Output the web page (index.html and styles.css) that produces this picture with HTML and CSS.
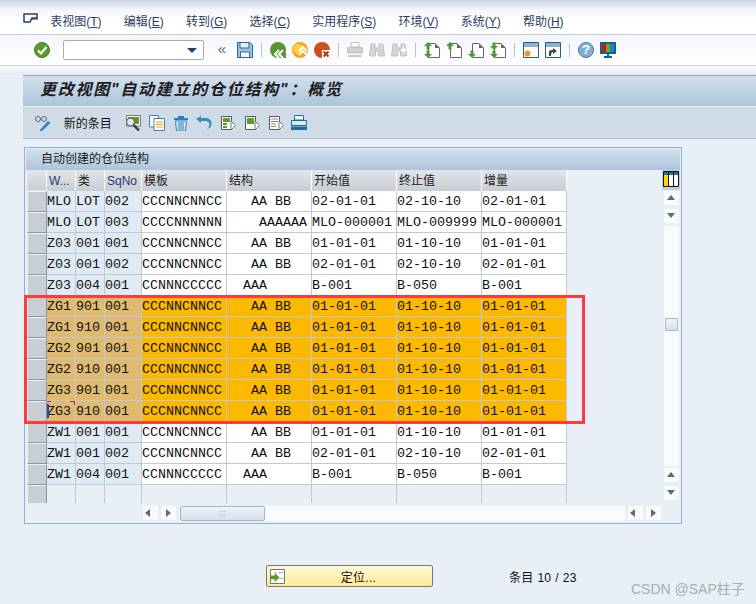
FILE: index.html
```html
<!DOCTYPE html>
<html lang="zh">
<head>
    <meta charset="UTF-8">
    <title>更改视图"自动建立的仓位结构"：概览</title>
    <link rel="stylesheet" href="styles.css">
</head>
<body>
    <svg class="defs" width="0" height="0">
        <defs>
            <symbol id="page" viewBox="0 0 16 16">
                <path d="M4.500 1.500H11L15.500 6V15.500H4.500Z" fill="#fff" stroke="#666"/>
                <path d="M11 1.500V6H15.500Z" fill="#666"/>
            </symbol>
            <symbol id="arrow-up" viewBox="0 0 8 8">
                <path d="M4 0L8 4H5.500V7.500H2.500V4H0Z" fill="#4b9a33"/>
            </symbol>
            <symbol id="arrow-down" viewBox="0 0 8 8">
                <path d="M4 8L8 4H5.500V.5H2.500V4H0Z" fill="#4b9a33"/>
            </symbol>
            <symbol id="doc-play" viewBox="0 0 16 16">
                <path d="M1.500 1.500H11.500V14.500H1.500Z" fill="#fff" stroke="#555"/>
                <path d="M11 6L15.500 10.500L11 15Z" fill="#fff" stroke="#777"/>
            </symbol>
        </defs>
    </svg>

    <div class="menubar">
        <svg class="menu-icon" viewBox="0 0 16 12"><path d="M1 1H14V5H9L7 9H1Z" fill="none" stroke="#27406b" stroke-width="1.500"/><path d="M8 6H15" stroke="#27406b" stroke-width="1.200"/></svg>
        <span class="menu-item">表视图(<u>T</u>)</span>
        <span class="menu-item">编辑(<u>E</u>)</span>
        <span class="menu-item">转到(<u>G</u>)</span>
        <span class="menu-item">选择(<u>C</u>)</span>
        <span class="menu-item">实用程序(<u>S</u>)</span>
        <span class="menu-item">环境(<u>V</u>)</span>
        <span class="menu-item">系统(<u>Y</u>)</span>
        <span class="menu-item">帮助(<u>H</u>)</span>
    </div>

    <div class="toolbar">
        <svg class="icon" viewBox="0 0 16 16"><circle cx="8" cy="8" r="7.500" fill="#5c9a2e" stroke="#467a22"/><path d="M4 8.500L7 11.500L12.500 5" fill="none" stroke="#fff" stroke-width="2.200"/></svg>
        <div class="command">
            <span class="command-arrow"></span>
        </div>
        <span class="chevrons">«</span>
        <svg class="icon" viewBox="0 0 16 16"><path d="M.5.500H13L15.500 3V15.500H.5Z" fill="#9fc3de" stroke="#1f6b9c"/><path d="M3 .5H12V6H3Z" fill="#e8f0f6" stroke="#1f6b9c"/><path d="M3.500 10H12.500V15.500H3.500Z" fill="#fff" stroke="#1f6b9c"/></svg>
        <span class="sep"></span>
        <svg class="icon" viewBox="0 0 16 16"><circle cx="8" cy="8" r="8" fill="#5a9331"/><path d="M3 11H16V16H7Z" fill="#5a9331"/><path d="M9 8L5 12L9 16M13 8L9 12L13 16" fill="none" stroke="#fff" stroke-width="2"/></svg>
        <svg class="icon" viewBox="0 0 16 16"><circle cx="8" cy="8" r="8" fill="#f4a21f"/><circle cx="6" cy="7" r="5" fill="#ffcf3c"/><path d="M7 9L11 5L15 9M7 13L11 9L15 13" fill="none" stroke="#fff" stroke-width="2"/></svg>
        <svg class="icon" viewBox="0 0 16 16"><circle cx="8" cy="8" r="8" fill="#cd4f1b"/><rect x="8" y="8" width="8" height="8" fill="#fff"/><path d="M9.500 9.500L14.500 14.500M14.500 9.500L9.500 14.500" stroke="#b5341a" stroke-width="2"/></svg>
        <span class="sep"></span>
        <svg class="icon dim" viewBox="0 0 16 16"><path d="M4 .5H12V5H4Z" fill="#fff" stroke="#bbb"/><path d="M.5 5.500H15.500V11H.5Z" fill="#ccc" stroke="#bbb"/><path d="M1 13H15V15H1Z" fill="#c4c4c4"/></svg>
        <svg class="icon dim" viewBox="0 0 16 16"><path d="M2 2H6V6H10V2H14L15.500 14H9.500V9H6.500V14H.5Z" fill="#d2d2d2" stroke="#bdbdbd"/></svg>
        <svg class="icon dim" viewBox="0 0 16 16"><path d="M2 2H6V6H10V2H14L15.500 14H9.500V9H6.500V14H.5Z" fill="#d2d2d2" stroke="#bdbdbd"/><path d="M10 8H15M12.500 5.500V10.500" stroke="#fff" stroke-width="2"/></svg>
        <span class="sep"></span>
        <span class="icon pageicon"><svg viewBox="0 0 16 16"><use href="#page"/></svg><svg class="arr a1" viewBox="0 0 8 8"><use href="#arrow-up"/></svg><svg class="arr a2" viewBox="0 0 8 8"><use href="#arrow-down"/></svg></span>
        <span class="icon pageicon"><svg viewBox="0 0 16 16"><use href="#page"/></svg><svg class="arr a1" viewBox="0 0 8 8"><use href="#arrow-up"/></svg></span>
        <span class="icon pageicon"><svg viewBox="0 0 16 16"><use href="#page"/></svg><svg class="arr a2" viewBox="0 0 8 8"><use href="#arrow-down"/></svg></span>
        <span class="icon pageicon"><svg viewBox="0 0 16 16"><use href="#page"/></svg><svg class="arr a1" viewBox="0 0 8 8"><use href="#arrow-down"/></svg><svg class="arr a2" viewBox="0 0 8 8"><use href="#arrow-down"/></svg></span>
        <span class="sep"></span>
        <svg class="icon" viewBox="0 0 16 16"><path d="M.5.500H15.500V15.500H.5Z" fill="#fff" stroke="#1f5f8b"/><path d="M1 1H15V5H1Z" fill="#8fb2d0"/><circle cx="4.500" cy="11.500" r="3" fill="#f59a12"/></svg>
        <svg class="icon" viewBox="0 0 16 16"><path d="M.5.500H15.500V15.500H.5Z" fill="#fff" stroke="#1f5f8b"/><path d="M1 1H15V5H1Z" fill="#8fb2d0"/><path d="M4 14V10Q4 8 7 8H8V6L12 9L8 12V10Q6 10 6 14Z" fill="#444"/></svg>
        <span class="sep"></span>
        <span class="icon help">?</span>
        <svg class="icon" viewBox="0 0 16 16"><path d="M0 0H16V12H0Z" fill="#14608f"/><path d="M2 2H6V10H2Z" fill="#cc1a1a"/><path d="M6 2H10V10H6Z" fill="#6aa82c"/><path d="M10 2H14V10H10Z" fill="#1d86c8"/><path d="M7 12H9V14H12V16H4V14H7Z" fill="#14608f"/></svg>
    </div>
    <div class="toolbar-foot"></div>

    <div class="title-bar">更改视图"自动建立的仓位结构"：概览</div>
    <div class="app-toolbar">
        <svg class="icon" viewBox="0 0 16 16"><circle cx="3" cy="4" r="2.500" fill="none" stroke="#666"/><circle cx="9" cy="4" r="2.500" fill="none" stroke="#666"/><path d="M5 15L13 6L15.500 8L7 16H5Z" fill="#2b84bd"/></svg>
        <span class="new-entry">新的条目</span>
        <svg class="icon" viewBox="0 0 16 16"><path d="M1.500.5H15.500V11H1.500Z" fill="#fff" stroke="#777"/><path d="M3 2H14V9H3Z" fill="#5c9a2e"/><circle cx="5.500" cy="7" r="4" fill="#dfe9ef" stroke="#555"/><path d="M8.500 10L14 15.500" stroke="#444" stroke-width="2.500"/></svg>
        <svg class="icon" viewBox="0 0 16 16"><path d="M.5.500H9.500V12H.5Z" fill="#fff" stroke="#4f7da6"/><path d="M5 3.500H15.500V15.500H5Z" fill="#fff" stroke="#4f7da6"/><path d="M7 7H14M7 9.500H14M7 12H14" stroke="#e2a21c"/></svg>
        <svg class="icon" viewBox="0 0 16 16"><path d="M1 3H15V5H1ZM5 3V1H11V3Z" fill="#2b7fb4"/><path d="M2.500 6H13.500L12.500 16H3.500Z" fill="#dceaf3" stroke="#2b7fb4"/><path d="M6 7V15M8 7V15M10 7V15" stroke="#2b7fb4"/></svg>
        <svg class="icon" viewBox="0 0 16 16"><path d="M5 8L0 4L5 1V3H9Q15.500 3 15.500 8.500Q15.500 13 11 14Q13.500 12 13.500 9.500Q13.500 6 9 6H5Z" fill="#3f88bd"/></svg>
        <svg class="icon" viewBox="0 0 16 16"><use href="#doc-play"/><path d="M3 3H10V7H3ZM3 8H7V10H3ZM3 11H7V13H3Z" fill="#5c9a2e"/></svg>
        <svg class="icon" viewBox="0 0 16 16"><use href="#doc-play"/><path d="M3 3H10V9H3Z" fill="#5c9a2e"/></svg>
        <svg class="icon" viewBox="0 0 16 16"><use href="#doc-play"/><path d="M3 4H10M3 6.500H10M3 9H8M3 11.500H8" stroke="#888"/></svg>
        <svg class="icon" viewBox="0 0 16 16"><path d="M3.500.5H12.500V5H3.500Z" fill="#fff" stroke="#1f6b9c"/><path d="M.5 5.500H15.500V10.500H.5Z" fill="#dceaf3" stroke="#1f6b9c"/><path d="M0 11.500H16V15H0Z" fill="#1f6b9c"/></svg>
    </div>

    <div class="panel">
        <div class="panel-title">自动创建的仓位结构</div>
        <div class="panel-body">
            <div class="table">
                <div class="row head">
                    <span class="sel"></span>
                    <span class="th blue">W...</span>
                    <span class="th">类</span>
                    <span class="th blue">SqNo</span>
                    <span class="th">模板</span>
                    <span class="th">结构</span>
                    <span class="th">开始值</span>
                    <span class="th">终止值</span>
                    <span class="th">增量</span>
                </div>
                <div class="row"><span class="sel"></span><span class="k">MLO</span><span class="k">LOT</span><span class="k">002</span><span class="c">CCCNNCNNCC</span><span class="c">   AA BB</span><span class="c">02-01-01</span><span class="c">02-10-10</span><span class="c">02-01-01</span></div>
                <div class="row"><span class="sel"></span><span class="k">MLO</span><span class="k">LOT</span><span class="k">003</span><span class="c">CCCCNNNNNN</span><span class="c">    AAAAAA</span><span class="c">MLO-000001</span><span class="c">MLO-009999</span><span class="c">MLO-000001</span></div>
                <div class="row"><span class="sel"></span><span class="k">Z03</span><span class="k">001</span><span class="k">001</span><span class="c">CCCNNCNNCC</span><span class="c">   AA BB</span><span class="c">01-01-01</span><span class="c">01-10-10</span><span class="c">01-01-01</span></div>
                <div class="row"><span class="sel"></span><span class="k">Z03</span><span class="k">001</span><span class="k">002</span><span class="c">CCCNNCNNCC</span><span class="c">   AA BB</span><span class="c">02-01-01</span><span class="c">02-10-10</span><span class="c">02-01-01</span></div>
                <div class="row"><span class="sel"></span><span class="k">Z03</span><span class="k">004</span><span class="k">001</span><span class="c">CCNNNCCCCC</span><span class="c">  AAA</span><span class="c">B-001</span><span class="c">B-050</span><span class="c">B-001</span></div>
                <div class="row on"><span class="sel"></span><span class="k">ZG1</span><span class="k">901</span><span class="k">001</span><span class="c">CCCNNCNNCC</span><span class="c">   AA BB</span><span class="c">01-01-01</span><span class="c">01-10-10</span><span class="c">01-01-01</span></div>
                <div class="row on"><span class="sel"></span><span class="k">ZG1</span><span class="k">910</span><span class="k">001</span><span class="c">CCCNNCNNCC</span><span class="c">   AA BB</span><span class="c">01-01-01</span><span class="c">01-10-10</span><span class="c">01-01-01</span></div>
                <div class="row on"><span class="sel"></span><span class="k">ZG2</span><span class="k">901</span><span class="k">001</span><span class="c">CCCNNCNNCC</span><span class="c">   AA BB</span><span class="c">01-01-01</span><span class="c">01-10-10</span><span class="c">01-01-01</span></div>
                <div class="row on"><span class="sel"></span><span class="k">ZG2</span><span class="k">910</span><span class="k">001</span><span class="c">CCCNNCNNCC</span><span class="c">   AA BB</span><span class="c">01-01-01</span><span class="c">01-10-10</span><span class="c">01-01-01</span></div>
                <div class="row on"><span class="sel"></span><span class="k">ZG3</span><span class="k">901</span><span class="k">001</span><span class="c">CCCNNCNNCC</span><span class="c">   AA BB</span><span class="c">01-01-01</span><span class="c">01-10-10</span><span class="c">01-01-01</span></div>
                <div class="row on"><span class="sel"></span><span class="k focus">ZG3</span><span class="k">910</span><span class="k">001</span><span class="c">CCCNNCNNCC</span><span class="c">   AA BB</span><span class="c">01-01-01</span><span class="c">01-10-10</span><span class="c">01-01-01</span></div>
                <div class="row"><span class="sel"></span><span class="k">ZW1</span><span class="k">001</span><span class="k">001</span><span class="c">CCCNNCNNCC</span><span class="c">   AA BB</span><span class="c">01-01-01</span><span class="c">01-10-10</span><span class="c">01-01-01</span></div>
                <div class="row"><span class="sel"></span><span class="k">ZW1</span><span class="k">001</span><span class="k">002</span><span class="c">CCCNNCNNCC</span><span class="c">   AA BB</span><span class="c">02-01-01</span><span class="c">02-10-10</span><span class="c">02-01-01</span></div>
                <div class="row"><span class="sel"></span><span class="k">ZW1</span><span class="k">004</span><span class="k">001</span><span class="c">CCNNNCCCCC</span><span class="c">  AAA</span><span class="c">B-001</span><span class="c">B-050</span><span class="c">B-001</span></div>
                <div class="row empty"><span class="sel"></span><span></span><span></span><span></span><span></span><span></span><span></span><span></span><span></span></div>
            </div>
            <div class="vscroll">
                <svg class="col-config" viewBox="0 0 16 16"><path d="M.5.500H15.500V15.500H.5Z" fill="#fff" stroke="#111"/><path d="M1 1H15V4H1Z" fill="#1d6fb5"/><path d="M1 4H5V15H1Z" fill="#ffd800"/><path d="M5.500 1V15M10.500 1V15" stroke="#111"/></svg>
                <span class="sbtn up"></span>
                <span class="sbtn down"></span>
                <div class="vtrack"><span class="vthumb"></span></div>
                <span class="sbtn up"></span>
                <span class="sbtn down"></span>
            </div>
        </div>
        <div class="hscroll">
            <span class="sbtn left"></span>
            <span class="sbtn right"></span>
            <div class="htrack"><span class="hthumb">:::</span></div>
            <span class="sbtn left"></span>
            <span class="sbtn right"></span>
        </div>
    </div>

    <div class="footer">
        <button class="locate">
            <svg class="locate-icon" viewBox="0 0 16 16"><path d="M.5.500H15.500V15.500H.5Z" fill="#fff" stroke="#666"/><path d="M9 4H14M5 4H7M10 10H14" stroke="#999"/><path d="M1 7H5V4L10 9L5 14V11H1Z" fill="#5c9a2e"/></svg>
            <span>定位...</span>
        </button>
        <span class="status">条目 10 / 23</span>
    </div>

    <div class="marked"></div>
    <div class="watermark">CSDN @SAP柱子</div>
</body>
</html>
```

FILE: styles.css
```css
body {
    margin: 0;
    height: 604px;
    overflow: hidden;
    position: relative;
    background: #e8eff6;
    font-family: "Liberation Sans", "Noto Sans CJK SC", sans-serif;
    font-size: 12px;
    color: #111;
}

.defs {
    position: absolute;
}

.icon {
    display: block;
    width: 16px;
    height: 16px;
    flex: none;
}

/* Menu bar */
.menubar {
    height: 35px;
    display: flex;
    align-items: center;
    padding: 6px 0 0 23px;
    box-sizing: border-box;
    gap: 22.200px;
    background: linear-gradient(#c9d5e8, #f4f6fa 30%, #fff 60%);
    border-bottom: 1px solid #c8ccd2;
}

.menu-icon {
    width: 16px;
    height: 12px;
    margin: -2px -11px 0 0;
}

.menu-item {
    color: #2b3d5e;
    white-space: nowrap;
}

/* Toolbar */
.toolbar {
    height: 30px;
    display: flex;
    align-items: center;
    gap: 6px;
    padding-left: 34px;
    background: linear-gradient(#f3f6fb, #fff);
    border-bottom: 1px solid #cfd5de;
}

.command {
    width: 141px;
    height: 20px;
    margin: 0 -1px 0 7px;
    background: #fff;
    border: 1px solid #a9adb3;
    border-radius: 2px;
    box-sizing: border-box;
    position: relative;
    flex: none;
}

.command-arrow {
    position: absolute;
    right: 6px;
    top: 7px;
    border: 5px solid transparent;
    border-top: 5px solid #1f3f73;
    border-bottom: 0;
}

.chevrons {
    width: 14px;
    margin: 0 2px 3px 6px;
    font-size: 15px;
    color: #666;
    text-align: center;
}

.sep {
    width: 1px;
    height: 14px;
    margin: 0 2px;
    background: #a9c4dc;
    flex: none;
}

.dim {
    opacity: .9;
}

.pageicon {
    position: relative;
}

.pageicon svg {
    position: absolute;
    left: 0;
    top: 0;
    width: 16px;
    height: 16px;
}

.pageicon .arr {
    width: 8px;
    height: 8px;
}

.pageicon .a2 {
    top: 8px;
}

.help {
    box-sizing: border-box;
    border-radius: 50%;
    background: #86aecf;
    border: 1px solid #3f7fae;
    color: #fff;
    font-weight: bold;
    font-size: 13px;
    line-height: 14px;
    text-align: center;
}

.toolbar-foot {
    height: 9px;
    background: linear-gradient(#f8fafc, #e3e9f1);
}

/* Title and application toolbar */
.title-bar {
    height: 31px;
    margin-left: 23px;
    padding-left: 17px;
    box-sizing: border-box;
    border-top: 1px solid #9aa6b6;
    background: linear-gradient(#d2e0ed, #adc4db);
    font-size: 16px;
    font-weight: bold;
    font-style: italic;
    letter-spacing: 1.750px;
    line-height: 28px;
    color: #1a1a1a;
    white-space: nowrap;
}

.app-toolbar {
    height: 32px;
    margin: 1px 0 0 23px;
    padding-left: 12px;
    box-sizing: border-box;
    display: flex;
    align-items: center;
    gap: 7.700px;
    background: #cfdce7;
    border-bottom: 1px solid #b0bfce;
}

.new-entry {
    width: 48px;
    margin: 0 6px 0 5px;
    color: #111;
    white-space: nowrap;
}

/* Table panel */
.panel {
    width: 658px;
    height: 377px;
    margin: 8px 0 0 24px;
    box-sizing: border-box;
    border: 1px solid #8fb1d6;
}

.panel-title {
    height: 22px;
    padding-left: 15px;
    background: linear-gradient(#d2e0ed, #adc4db);
    line-height: 21px;
    color: #1a1a1a;
    border: 1px solid #e8eff6;
    border-width: 1px 1px 0;
    box-sizing: border-box;
}

.panel-body {
    display: flex;
    justify-content: space-between;
    padding-left: 2px;
}

.table {
    width: 540px;
}

.row {
    display: grid;
    grid-template-columns: 20px 29px 29px 37px 85px 85px 85px 85px 85px;
    height: 21px;
    font-family: "Liberation Mono", monospace;
    font-size: 13.330px;
    line-height: 22px;
    white-space: pre;
}

.row > span {
    box-sizing: border-box;
    border-right: 1px solid #bfc9d8;
    border-bottom: 1px solid #bfc9d8;
    overflow: hidden;
}

.k {
    background: #dfeaf4;
}

.c {
    background: #fff;
    padding-left: 0;
}

.on .k {
    background: #e0bb6f;
}

.on .c {
    background: #fdb900;
}

.row .sel {
    background: #c8ced6;
    border: 1px solid #f0f3f6;
    border-right-color: #8e949c;
    border-bottom-color: #8e949c;
}

.head {
    font-family: "Liberation Sans", "Noto Sans CJK SC", sans-serif;
    font-size: 12px;
    height: 21px;
    line-height: 22px;
}

.row .th {
    padding-left: 2px;
    background: linear-gradient(#e2e4e8, #c9ced5);
    color: #222;
    border-right-color: #fff;
    border-bottom: 0;
}

.row.head .sel {
    background: linear-gradient(#e2e4e8, #c9ced5);
    border-color: #e2e4e8;
    border-right-color: #fff;
}

.row .blue {
    color: #1e3a6e;
}

.empty {
    height: 18px;
}

.row.empty > span {
    border-bottom: 0;
}

.focus {
    position: relative;
}

.focus::before {
    content: "";
    position: absolute;
    left: 0;
    top: 3px;
    width: 2px;
    height: 14px;
    background: #2347a8;
}

/* red corner ticks on the focused cell */
.focus::after {
    content: "";
    position: absolute;
    left: -1px;
    right: 0;
    top: 0;
    height: 4px;
    background:
        linear-gradient(#d8232a, #d8232a) left top / 5px 1px no-repeat,
        linear-gradient(#d8232a, #d8232a) left top / 1px 100% no-repeat,
        linear-gradient(#d8232a, #d8232a) right top / 5px 1px no-repeat,
        linear-gradient(#d8232a, #d8232a) right top / 1px 100% no-repeat;
}

/* Scrollbars */
.vscroll {
    width: 18px;
    margin-right: 1px;
    display: flex;
    flex-direction: column;
    align-items: center;
}

.col-config {
    width: 16px;
    height: 16px;
    padding: 1px 1px 3px;
    background: #c9ced5;
    margin-bottom: 1px;
}

.sbtn {
    width: 15px;
    height: 14px;
    background: #f8fafc;
    position: relative;
    display: block;
    flex: none;
}

.sbtn::after {
    content: "";
    position: absolute;
    left: 3px;
    top: 4px;
    border: 4.500px solid transparent;
    border-top: 0;
    border-bottom: 5px solid #5a6b7c;
}

.sbtn.down::after {
    border-bottom: 0;
    border-top: 5px solid #5a6b7c;
}

.sbtn.left::after,
.sbtn.right::after {
    left: 5px;
    top: 2.500px;
    border: 4.500px solid transparent;
}

.sbtn.left::after {
    left: 2px;
    border-left: 0;
    border-right: 5px solid #5a6b7c;
}

.sbtn.right::after {
    left: 5px;
    border-right: 0;
    border-left: 5px solid #5a6b7c;
}

.vscroll .down {
    margin-top: 4px;
}

.vtrack {
    width: 15px;
    height: 240px;
    margin: 3px 0 2px;
    background: #f8fafc;
    position: relative;
}

.vthumb {
    position: absolute;
    left: 1px;
    top: 92px;
    width: 13px;
    height: 13px;
    box-sizing: border-box;
    background: linear-gradient(#f0f4f8, #d3dfea);
    border: 1px solid #a9b6c3;
    border-radius: 1px;
}

.hscroll {
    display: flex;
    align-items: center;
    gap: 3px;
    height: 14px;
    margin: 3px 0 0 118px;
    width: 518px;
}

.htrack {
    flex: 1;
    height: 15px;
    margin-left: 1px;
    background: #f8fafc;
}

.hthumb {
    display: block;
    width: 85px;
    height: 15px;
    box-sizing: border-box;
    background: linear-gradient(#eef3f8, #d3dfea);
    border: 1px solid #a9b6c3;
    border-radius: 2px;
    color: #8a96a3;
    font-size: 8px;
    line-height: 11px;
    text-align: center;
}

/* Footer */
.footer {
    display: flex;
    align-items: center;
    margin: 41px 0 0 266px;
}

.locate {
    width: 167px;
    height: 22px;
    padding: 0;
    display: flex;
    align-items: center;
    position: relative;
    background: linear-gradient(#fff9dc, #ffe98f);
    border: 1px solid #777;
    border-radius: 2px;
    font-family: "Liberation Sans", "Noto Sans CJK SC", sans-serif;
    font-size: 12px;
    color: #111;
}

.locate span {
    flex: 1;
    text-align: center;
    letter-spacing: .3px;
}

.locate-icon {
    width: 15px;
    height: 15px;
    margin-left: 3px;
}

.status {
    margin: 1px 0 0 76px;
    letter-spacing: .2px;
    word-spacing: .5px;
}

/* Overlays */
.marked {
    position: absolute;
    left: 24px;
    top: 295px;
    width: 561px;
    height: 129px;
    box-sizing: border-box;
    border: 3px solid #fb3b3d;
}

.watermark {
    position: absolute;
    left: 631px;
    top: 578px;
    font-size: 14px;
    color: #a9adb1;
    white-space: nowrap;
}
```
